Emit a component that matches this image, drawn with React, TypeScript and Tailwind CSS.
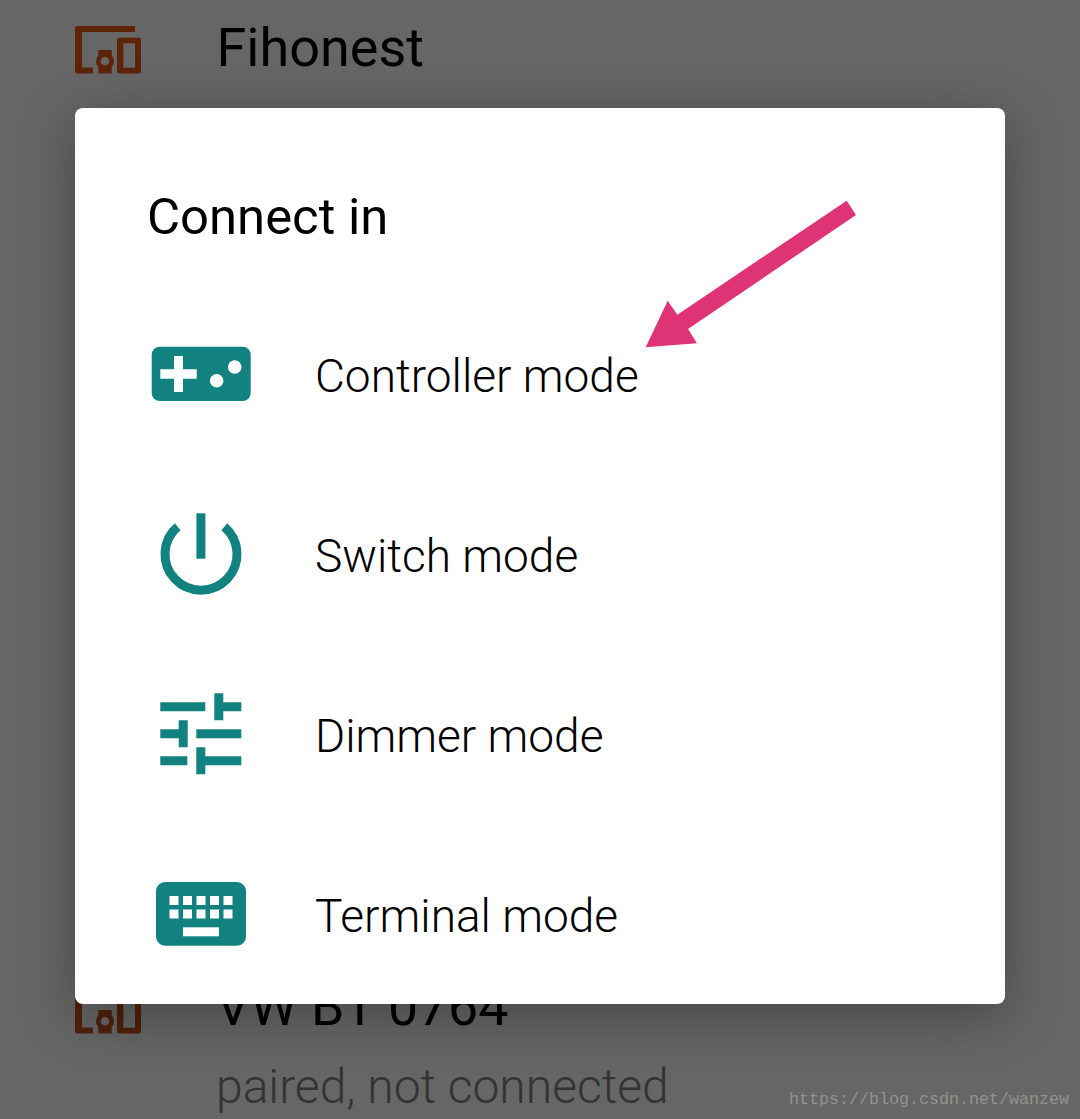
import React from 'react'

const DeviceIcon: React.FC<{ color: string }> = ({ color }) => (
  <svg width="66" height="48" viewBox="0 0 66 48" className="shrink-0">
    <path
      fill={color}
      fillRule="evenodd"
      d="M2 0H60V6H7V41.6H18V47.4H2Q0 47.4 0 45.4V2Q0 0 2 0ZM44 11.7H64Q66 11.7 66 13.7V45.4Q66 47.4 64 47.4H44Q42 47.4 42 45.4V13.7Q42 11.7 44 11.7ZM48.3 17.3V41.7H60V17.3ZM23.3 24H36.7V29.3A9 9 0 0 1 36.7 41.3V47.4H23.3V41.3A9 9 0 0 1 23.3 29.3ZM30 31A4.3 4.3 0 1 0 30 39.6A4.3 4.3 0 1 0 30 31Z"
    />
  </svg>
)

const GamepadIcon = () => (
  <svg width="108" height="108" viewBox="0 0 108 108">
    <rect x="4.7" y="26.7" width="99" height="54.3" rx="8" fill="#128281" />
    <path d="M13.3 49.3H27V36H36V49.3H49.7V58.7H36V72H27V58.7H13.3Z" fill="#fff" />
    <circle cx="69.7" cy="60.7" r="6.8" fill="#fff" />
    <circle cx="87.7" cy="47" r="6.8" fill="#fff" />
  </svg>
)

const PowerIcon = () => (
  <svg width="108" height="108" viewBox="0 0 108 108">
    <path d="M30.7 26.7A36 36 0 1 0 77.3 26.7" fill="none" stroke="#128281" strokeWidth="9" />
    <rect x="49.4" y="13.3" width="9" height="45.4" fill="#128281" />
  </svg>
)

const SlidersIcon = () => (
  <svg width="108" height="108" viewBox="0 0 108 108">
    <path
      fill="#128281"
      d="M13.3 22.3H58.3V31.3H13.3ZM67.3 13.3H76.3V22.3H94.3V31.3H76.3V40.3H67.3ZM13.3 49.3H31.7V40.3H40.7V67.3H31.7V58.3H13.3ZM49.3 49.3H94.3V58.3H49.3ZM13.3 76.3H40.3V85.3H13.3ZM49.3 67.3H58.3V76.3H94.3V85.3H58.3V94.3H49.3Z"
    />
  </svg>
)

const KeyboardIcon = () => (
  <svg width="108" height="108" viewBox="0 0 108 108">
    <rect x="9" y="22" width="90" height="63.7" rx="9" fill="#128281" />
    {[22.5, 36, 49.5, 63, 76.5].map((x) => (
      <React.Fragment key={x}>
        <rect x={x} y="36" width="9" height="9" fill="#fff" />
        <rect x={x} y="49.5" width="9" height="9" fill="#fff" />
      </React.Fragment>
    ))}
    <rect x="36" y="67.3" width="36" height="9" fill="#fff" />
  </svg>
)

const modes = [
  { label: 'Controller mode', icon: <GamepadIcon /> },
  { label: 'Switch mode', icon: <PowerIcon /> },
  { label: 'Dimmer mode', icon: <SlidersIcon /> },
  { label: 'Terminal mode', icon: <KeyboardIcon /> },
]

export default function App() {
  return (
    <div className="relative w-[1080px] h-[1119px] overflow-hidden bg-[#666666] font-['Roboto',sans-serif] text-black">
      {/* list behind the dialog */}
      <div className="flex items-start gap-[76px] pl-[75px] pt-[26px]">
        <DeviceIcon color="#5e2409" />
        <span className="text-[54px] leading-[64px] -mt-[10px] -ml-[0.5px]">Fihonest</span>
      </div>
      <div className="absolute left-[75px] top-[986px] flex gap-[76px]">
        <div>
          <DeviceIcon color="#50200a" />
        </div>
        <div className="-ml-[1px] -mt-[6px]">
          <div className="text-[53.6px] leading-[54px]">VW BT 0764</div>
          <div className="mt-[23px] text-[48px] leading-[60px] font-light text-[#333]">paired, not connected</div>
        </div>
      </div>

      {/* dialog */}
      <div className="absolute left-[75px] top-[108px] w-[930px] h-[896px] rounded-[8px] bg-white shadow-[0_12px_56px_rgba(0,0,0,0.32)]">
        <div className="h-[178px] pl-[72px] pt-[79px] text-[50.8px] leading-[60px]">Connect in</div>
        {modes.map((mode) => (
          <div key={mode.label} className="flex items-center h-[180px] pl-[72px]">
            <div className="-mt-[4px] w-[108px] h-[108px]">{mode.icon}</div>
            <span className="ml-[60px] text-[46px] leading-[60px] font-light">{mode.label}</span>
          </div>
        ))}
      </div>

      {/* annotation arrow */}
      <svg className="absolute left-[640px] top-[195px]" width="220" height="160" viewBox="0 0 220 160">
        <polygon
          fill="#de3476"
          points="206.7,5.7 216,20 48,134 57,148.3 5.7,152.3 27.7,105.7 37.3,119.7"
        />
      </svg>

      <div className="absolute left-[789px] top-[1090px] font-['Liberation_Mono',monospace] text-[16.67px] leading-[20px] text-[#93938d]">
        https://blog.csdn.net/wanzew
      </div>
    </div>
  )
}
